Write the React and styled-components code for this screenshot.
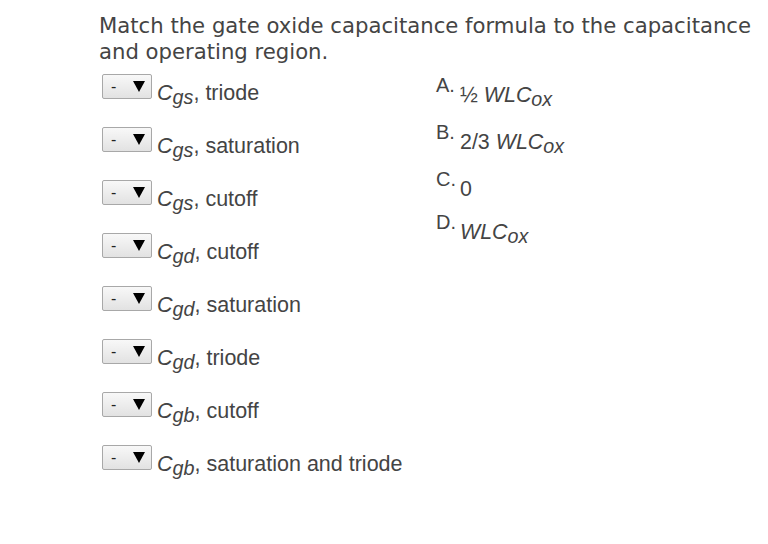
import React from 'react';
import styled, { createGlobalStyle } from 'styled-components';

const Global = createGlobalStyle`
  html, body { margin: 0; padding: 0; background: #fff; }
`;

const Page = styled.div`
  width: 768px;
  height: 544px;
  box-sizing: border-box;
  padding: 13px 0 0 99px;
  font-family: "Liberation Sans", Arial, sans-serif;
  color: #444;
`;

const Prompt = styled.p`
  margin: 0;
  font-family: "DejaVu Sans", Verdana, sans-serif;
  font-size: 21.2px;
  line-height: 26px;
  color: #444;
`;

const Body = styled.div`
  display: grid;
  grid-template-columns: 334px 1fr;
  margin-top: 9px;
  padding-left: 3px;
`;

const Questions = styled.div`
  display: flex;
  flex-direction: column;
`;

const Row = styled.div`
  display: flex;
  align-items: flex-start;
  height: 53px;
`;

const Dropdown = styled.div`
  box-sizing: border-box;
  width: 50px;
  height: 25px;
  flex: none;
  display: flex;
  align-items: center;
  justify-content: space-between;
  padding: 0 6px 0 8px;
  border: 1px solid #a8a8a8;
  border-radius: 2px;
  background: linear-gradient(#f8f8f8, #e2e2e2);
  font-size: 16px;
  color: #222;
`;

const Label = styled.span`
  margin: 7px 0 0 5px;
  font-size: 21.5px;
  line-height: 24px;
  color: #444;
  white-space: nowrap;
`;

const Sym = styled.i`
  font-style: italic;
`;

const Sub = styled.sub`
  font-size: 0.92em;
  font-style: italic;
  vertical-align: -4px;
`;

const Answers = styled.div`
  display: flex;
  flex-direction: column;
  gap: 12px;
  padding-top: 1px;
`;

const Option = styled.div`
  display: flex;
  align-items: flex-start;
`;

const Letter = styled.span`
  width: 24px;
  flex: none;
  font-size: 20px;
  line-height: 20px;
  color: #444;
`;

const Value = styled.span`
  margin-top: 9px;
  font-size: 21.4px;
  line-height: 22px;
  color: #444;
  white-space: nowrap;
`;

const Arrow = () => (
  <svg width="12" height="11" viewBox="0 0 12 11">
    <polygon points="0,0 12,0 6,11" fill="#000" />
  </svg>
);

const questions = [
  ['gs', 'triode'],
  ['gs', 'saturation'],
  ['gs', 'cutoff'],
  ['gd', 'cutoff'],
  ['gd', 'saturation'],
  ['gd', 'triode'],
  ['gb', 'cutoff'],
  ['gb', 'saturation and triode'],
];

const WLC = () => (
  <>
    <Sym>WLC</Sym>
    <Sub>ox</Sub>
  </>
);

const answers = [
  ['A.', <>½ <WLC /></>],
  ['B.', <>2/3 <WLC /></>],
  ['C.', <>0</>],
  ['D.', <WLC />],
];

export default function App() {
  return (
    <>
      <Global />
      <Page>
        <Prompt>
          Match the gate oxide capacitance formula to the capacitance and operating region.
        </Prompt>
        <Body>
          <Questions>
            {questions.map(([s, r], i) => (
              <Row key={i}>
                <Dropdown role="listbox">
                  <span>-</span>
                  <Arrow />
                </Dropdown>
                <Label>
                  <Sym>C</Sym>
                  <Sub>{s}</Sub>, {r}
                </Label>
              </Row>
            ))}
          </Questions>
          <Answers>
            {answers.map(([l, v]) => (
              <Option key={l}>
                <Letter>{l}</Letter>
                <Value>{v}</Value>
              </Option>
            ))}
          </Answers>
        </Body>
      </Page>
    </>
  );
}
